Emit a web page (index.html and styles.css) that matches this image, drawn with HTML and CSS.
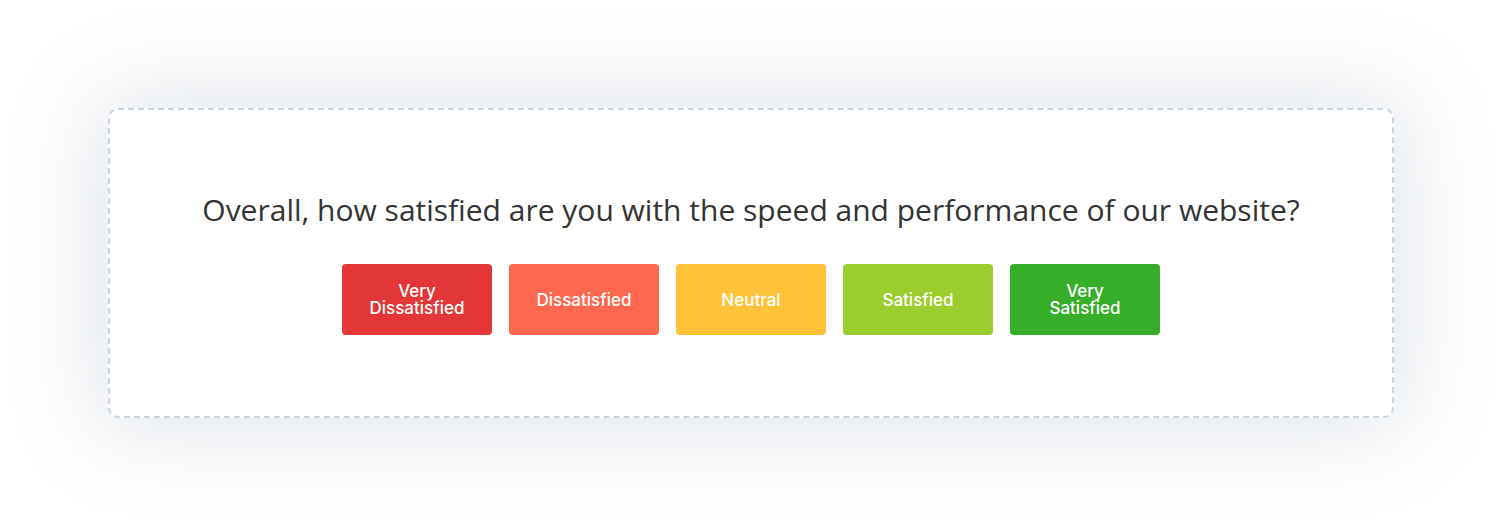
FILE: index.html
```html
<!DOCTYPE html>
<html lang="en">

<head>
    <meta charset="UTF-8">
    <meta name="viewport" content="width=device-width, initial-scale=1.0">
    <title>Satisfaction Survey</title>
    <link rel="stylesheet" href="styles.css">
</head>

<body>
    <div class="stage">
        <div class="survey-card">
            <h2 class="question">Overall, how satisfied are you with the speed and performance of our website?</h2>
            <div class="answers">
                <button class="answer very-dissatisfied">Very<br>Dissatisfied</button>
                <button class="answer dissatisfied">Dissatisfied</button>
                <button class="answer neutral">Neutral</button>
                <button class="answer satisfied">Satisfied</button>
                <button class="answer very-satisfied">Very<br>Satisfied</button>
            </div>
        </div>
    </div>
</body>

</html>
```

FILE: styles.css
```css
body {
    margin: 0;
    background-color: white;
    font-family: "Open Sans", sans-serif;
}

.stage {
    height: 524px;
    box-sizing: border-box;
    padding: 108px 106px 0 108px;
}

.survey-card {
    height: 310px;
    box-sizing: border-box;
    background-color: white;
    border: 2px dashed #cad4dd;
    border-radius: 10px;
    box-shadow: 0 0 90px 10px rgba(110, 130, 160, 0.22);
    padding-top: 80px;
}

.question {
    margin: 0;
    text-align: center;
    font-size: 30px;
    line-height: 40px;
    font-weight: 400;
    color: #333;
}

.answers {
    display: flex;
    justify-content: center;
    gap: 17px;
    margin-top: 34px;
}

.answer {
    width: 150px;
    height: 71px;
    border: none;
    border-radius: 4px;
    color: white;
    font-family: "Inter", sans-serif;
    font-size: 17px;
    font-weight: 500;
    line-height: 17px;
    padding: 1px 0 0;
    cursor: pointer;
}

.very-dissatisfied {
    background-color: #e33636;
}

.dissatisfied {
    background-color: #ff684f;
}

.neutral {
    background-color: #ffc238;
}

.satisfied {
    background-color: #9ccd2e;
}

.very-satisfied {
    background-color: #36ae29;
}
```
